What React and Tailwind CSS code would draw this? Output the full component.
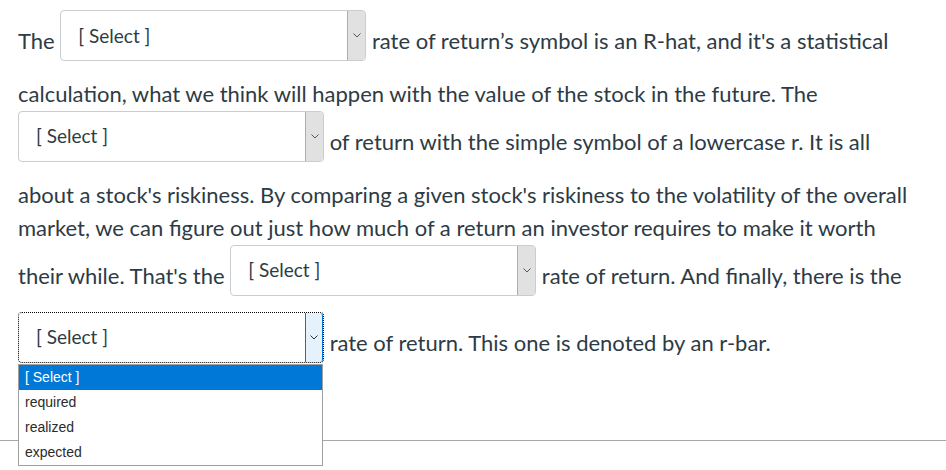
import React from "react";

const options = ["[ Select ]", "required", "realized", "expected"];

function Chevron({ color = "#555" }) {
  return (
    <svg width="8" height="5" viewBox="0 0 8 5" fill="none">
      <path d="M0.5 0.5 L4 4 L7.5 0.5" stroke={color} strokeWidth="1" />
    </svg>
  );
}

function FakeSelect({ open = false }) {
  return (
    <span
      className={
        "relative inline-flex align-middle mb-4 w-[306px] h-[51px] rounded-[4px] bg-white " +
        (open ? "border border-dotted border-black" : "border border-[#c7cdd1]")
      }
    >
      <span className="flex-1 flex items-center pl-[17px] pb-[1px] text-[19px] leading-none text-[#2d3b45]">[ Select ]</span>
      <span
        className={
          "w-[18px] flex items-center justify-center rounded-r-[3px] " +
          (open ? "bg-[#e5f1fb] border-l border-r border-[#0078d7]" : "bg-[#e1e1e1] border-l border-[#adadad]")
        }
      >
        <Chevron color={open ? "#333" : "#555"} />
      </span>
      {open && (
        <span className="absolute left-[-1px] top-[51px] z-10 w-[305px] flex flex-col border border-[#a0a0a0] bg-white font-['Liberation_Sans',Arial,sans-serif] text-[14px] leading-none">
          {options.map((o, i) => (
            <span
              key={o}
              className={
                "h-[25px] flex items-center px-[6px] " +
                (i === 0 ? "bg-[#0078d7] text-white" : "text-[#2b2b2b]")
              }
            >
              {o}
            </span>
          ))}
        </span>
      )}
    </span>
  );
}

export default function App() {
  return (
    <div className="w-[946px] h-[470px] bg-white overflow-hidden font-['Lato','Open_Sans',sans-serif] text-[#2d3b45]">
      <p className="w-[918px] pl-[18px] pt-[10px] text-[22px] leading-[33.5px]">
        The <FakeSelect /> rate of return’s symbol is an R-hat, and it's a statistical calculation, what we
        think will happen with the value of the stock in the future. The <FakeSelect /> of return with the simple
        symbol of a lowercase r. It is all about a stock's riskiness. By comparing a given stock's riskiness to the
        volatility of the overall market, we can figure out just how much of a return an investor requires to make it
        worth their while. That's the <FakeSelect /> rate of return. And finally, there is the{" "}
        <FakeSelect open /> rate of return. This one is denoted by an r-bar.
      </p>
      <div className="mt-[61px] border-t border-[#a6a6a6]" />
    </div>
  );
}
